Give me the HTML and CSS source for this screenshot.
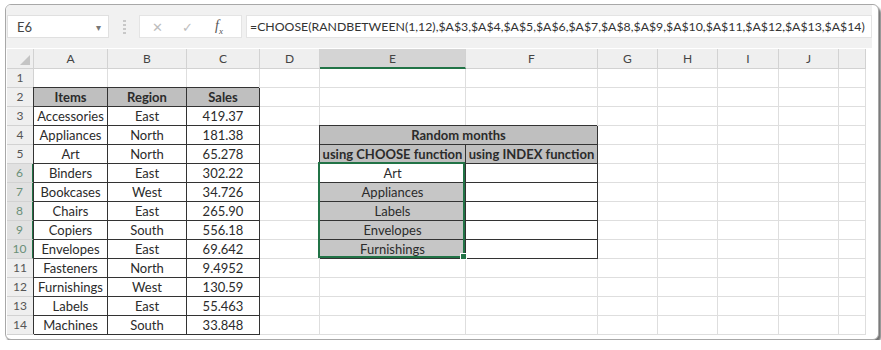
FILE: index.html
```html
<!DOCTYPE html>
<html lang="en">
<head>
  <meta charset="UTF-8">
  <title>CHOOSE random months</title>
  <link rel="stylesheet" href="styles.css">
</head>
<body>
  <div id="frame">
    <div id="toolbar">
      <div class="namebox">E6<span class="drop">&#9662;</span></div>
      <div class="sep"></div>
      <div class="fnbox">
        <span class="fn-x">&#10005;</span>
        <span class="fn-ok">&#10003;</span>
        <span class="fn-fx">f<sub>x</sub></span>
      </div>
      <div class="formula">=CHOOSE(RANDBETWEEN(1,12),$A$3,$A$4,$A$5,$A$6,$A$7,$A$8,$A$9,$A$10,$A$11,$A$12,$A$13,$A$14)</div>
    </div>

    <div id="sheet">
      <!-- column headers -->
      <div class="ch corner"><svg width="10" height="10" viewBox="0 0 10 10"><polygon points="10,0 10,10 0,10" fill="#c4c4c4"/></svg></div>
      <div class="ch">A</div><div class="ch">B</div><div class="ch">C</div><div class="ch">D</div>
      <div class="ch ch-on">E</div><div class="ch">F</div><div class="ch">G</div><div class="ch">H</div>
      <div class="ch">I</div><div class="ch">J</div><div class="ch"></div>

      <div class="rh">1</div>
      <div class="c"></div><div class="c"></div><div class="c"></div><div class="c"></div><div class="c"></div><div class="c"></div><div class="c"></div><div class="c"></div><div class="c"></div><div class="c"></div><div class="c"></div>

      <div class="rh">2</div>
      <div class="c b hd">Items</div><div class="c b hd">Region</div><div class="c b hd">Sales</div>
      <div class="c"></div><div class="c"></div><div class="c"></div><div class="c"></div><div class="c"></div><div class="c"></div><div class="c"></div><div class="c"></div>

      <div class="rh">3</div>
      <div class="c b">Accessories</div><div class="c b">East</div><div class="c b">419.37</div>
      <div class="c"></div><div class="c"></div><div class="c"></div><div class="c"></div><div class="c"></div><div class="c"></div><div class="c"></div><div class="c"></div>

      <div class="rh">4</div>
      <div class="c b">Appliances</div><div class="c b">North</div><div class="c b">181.38</div>
      <div class="c"></div><div class="c b hd wide">Random months</div><div class="c"></div><div class="c"></div><div class="c"></div><div class="c"></div><div class="c"></div>

      <div class="rh">5</div>
      <div class="c b">Art</div><div class="c b">North</div><div class="c b">65.278</div>
      <div class="c"></div><div class="c b hd">using CHOOSE function</div><div class="c b hd">using INDEX function</div>
      <div class="c"></div><div class="c"></div><div class="c"></div><div class="c"></div><div class="c"></div>

      <div class="rh rh-on">6</div>
      <div class="c b">Binders</div><div class="c b">East</div><div class="c b">302.22</div>
      <div class="c"></div>
      <div class="c b active">Art<div class="sel"><span class="handle"></span></div></div>
      <div class="c b"></div>
      <div class="c"></div><div class="c"></div><div class="c"></div><div class="c"></div><div class="c"></div>

      <div class="rh rh-on">7</div>
      <div class="c b">Bookcases</div><div class="c b">West</div><div class="c b">34.726</div>
      <div class="c"></div><div class="c b picked">Appliances</div><div class="c b"></div>
      <div class="c"></div><div class="c"></div><div class="c"></div><div class="c"></div><div class="c"></div>

      <div class="rh rh-on">8</div>
      <div class="c b">Chairs</div><div class="c b">East</div><div class="c b">265.90</div>
      <div class="c"></div><div class="c b picked">Labels</div><div class="c b"></div>
      <div class="c"></div><div class="c"></div><div class="c"></div><div class="c"></div><div class="c"></div>

      <div class="rh rh-on">9</div>
      <div class="c b">Copiers</div><div class="c b">South</div><div class="c b">556.18</div>
      <div class="c"></div><div class="c b picked">Envelopes</div><div class="c b"></div>
      <div class="c"></div><div class="c"></div><div class="c"></div><div class="c"></div><div class="c"></div>

      <div class="rh rh-on">10</div>
      <div class="c b">Envelopes</div><div class="c b">East</div><div class="c b">69.642</div>
      <div class="c"></div><div class="c b picked">Furnishings</div><div class="c b"></div>
      <div class="c"></div><div class="c"></div><div class="c"></div><div class="c"></div><div class="c"></div>

      <div class="rh">11</div>
      <div class="c b">Fasteners</div><div class="c b">North</div><div class="c b">9.4952</div>
      <div class="c"></div><div class="c"></div><div class="c"></div><div class="c"></div><div class="c"></div><div class="c"></div><div class="c"></div><div class="c"></div>

      <div class="rh">12</div>
      <div class="c b">Furnishings</div><div class="c b">West</div><div class="c b">130.59</div>
      <div class="c"></div><div class="c"></div><div class="c"></div><div class="c"></div><div class="c"></div><div class="c"></div><div class="c"></div><div class="c"></div>

      <div class="rh">13</div>
      <div class="c b">Labels</div><div class="c b">East</div><div class="c b">55.463</div>
      <div class="c"></div><div class="c"></div><div class="c"></div><div class="c"></div><div class="c"></div><div class="c"></div><div class="c"></div><div class="c"></div>

      <div class="rh">14</div>
      <div class="c b">Machines</div><div class="c b">South</div><div class="c b">33.848</div>
      <div class="c"></div><div class="c"></div><div class="c"></div><div class="c"></div><div class="c"></div><div class="c"></div><div class="c"></div><div class="c"></div>
    </div>
  </div>
</body>
</html>
```

FILE: styles.css
```css
html, body {margin:0; padding:0; background:#fff;}
body {font-family:Lato, "Liberation Sans", sans-serif; color:#2b2b2b;}

#frame {margin:4px 0 0 5px; width:866px; height:334px; padding:0 6px 0 0; border:1px solid #a8a8a8; border-radius:6px; box-shadow:2px 3px 2px rgba(0,0,0,0.55); overflow:hidden; background:#fff;}

#toolbar {display:flex; align-items:center; height:43px; padding-left:1px; background:#f1f1f1; font-size:13px;}
.namebox {position:relative; width:102px; height:23px; box-sizing:border-box; background:#fff; border:1px solid #e0e0e0; padding-left:9px; line-height:22px; color:#444;}
.drop {position:absolute; right:7px; top:0; font-size:10px; color:#777;}
.sep {width:3px; height:14px; margin:0 13px 0 14px; background:repeating-linear-gradient(#c8c8c8 0 2px, transparent 2px 4px);}
.fnbox {display:flex; align-items:center; width:103px; height:23px; box-sizing:border-box; background:#fff; border:1px solid #e4e4e4; color:#bdbdbd; font-size:13px;}
.fn-x {margin-left:12px;}
.fn-ok {margin-left:19px;}
.fn-fx {margin-left:22px; font-family:"Liberation Serif", serif; font-style:italic; color:#555; font-size:14px;}
.fn-fx sub {font-size:9px;}
.formula {flex:1; height:23px; margin-left:4px; box-sizing:border-box; background:#fff; border:1px solid #e4e4e4; padding-left:3px; line-height:22px; white-space:nowrap; overflow:hidden; color:#333; font-size:12.3px;}

#sheet {display:grid; grid-template-columns:27px 74px 79px 73px 60px 146px 132px 60px 60px 61px 60px 27px; grid-auto-rows:19px; grid-template-rows:20px; margin:1px 0 0 1px; font-size:13px;}
#sheet > div {box-sizing:border-box; border-right:1px solid #dedede; border-bottom:1px solid #dedede; text-align:center; line-height:18px; white-space:nowrap;}
#sheet > .ch {background:#efefef; border-color:#d2d2d2; color:#444; font-size:12px; line-height:19px;}
#sheet > .corner {display:flex; align-items:flex-end; justify-content:flex-end; padding:0 3px 3px 0;}
#sheet > .ch-on {background:#d4d4d4; border-bottom:2px solid #217346;}
#sheet > .rh {background:#efefef; border-color:#d2d2d2; color:#555; font-size:12px;}
#sheet > .rh-on {background:#e1e1e1; color:#6a8f78; border-right:2px solid #217346;}
#sheet > .b {border-color:#333; box-shadow:-1px -1px 0 #333;}
#sheet > .hd {background:#bfbfbf; font-weight:bold;}
#sheet > .wide {grid-column:span 2;}
#sheet > .picked {background:#c6c6c6;}
#sheet > .active {position:relative;}
.sel {position:absolute; left:-2px; top:-2px; width:147px; height:96px; box-sizing:border-box; border:2px solid #217346; pointer-events:none;}
.handle {position:absolute; right:-4px; bottom:-4px; width:5px; height:5px; background:#217346; border:1px solid #fff;}
```
